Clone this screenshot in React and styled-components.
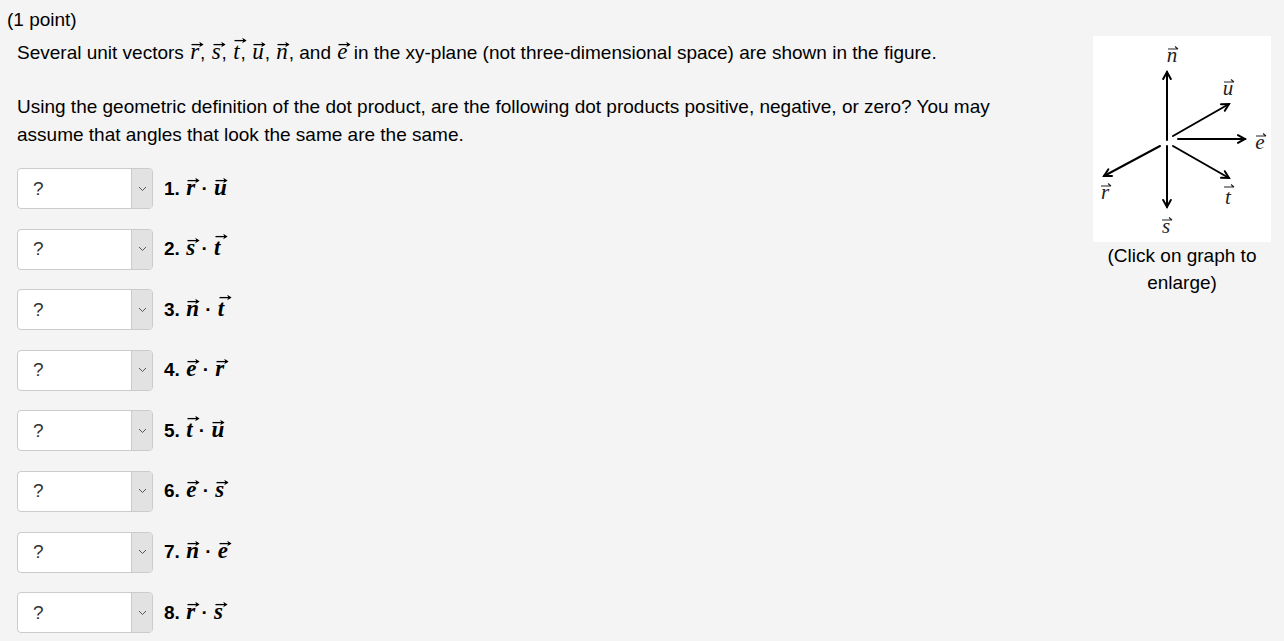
import React from 'react';
import styled, { createGlobalStyle } from 'styled-components';

const GlobalStyle = createGlobalStyle`
  body {
    margin     : 0;
    background : #f4f4f4;
    color      : #000;
    font-family: "Liberation Sans", Arial, sans-serif;
  }
`;

const ITEMS = [
  ['r', 'u'],
  ['s', 't'],
  ['n', 't'],
  ['e', 'r'],
  ['t', 'u'],
  ['e', 's'],
  ['n', 'e'],
  ['r', 's'],
];

const Vec = ({ l, bold }) => (
  <Vec.Wrap bold={bold}>
    <Vec.Arrow tall={l === 't'} viewBox="0 0 13 7" preserveAspectRatio="none">
      <path d="M0.5 3.6 H11.5" fill="none" stroke="#000" strokeWidth="1.3" />
      <path d="M8.2 0.8 L12.6 3.6 L8.2 6.2 L9.4 3.6 Z" fill="#000" />
    </Vec.Arrow>
    {l}
  </Vec.Wrap>
);

Vec.Wrap = styled.span`
  position    : relative;
  display     : inline-block;
  font-family : "Liberation Serif", "Times New Roman", serif;
  font-style  : italic;
  font-size   : 23px;
  font-weight : ${p => (p.bold ? 'bold' : 'normal')};
  line-height : 1;
  padding     : 0 1px;
`;

Vec.Arrow = styled.svg`
  position : absolute;
  left     : 2px;
  top      : ${p => (p.tall ? '-3px' : '1px')};
  width    : 13px;
  height   : 7px;
`;

const Arrow = ({ from, to }) => {
  const [x1, y1] = from;
  const [x2, y2] = to;
  const a = Math.atan2(y2 - y1, x2 - x1);
  const len = 8;
  const spread = 0.5;
  const h1 = [x2 - len * Math.cos(a - spread), y2 - len * Math.sin(a - spread)];
  const h2 = [x2 - len * Math.cos(a + spread), y2 - len * Math.sin(a + spread)];
  return (
    <g stroke="#000" strokeWidth="2" fill="none" strokeLinecap="round">
      <line x1={x1} y1={y1} x2={x2} y2={y2} />
      <polyline points={`${h1.join(',')} ${x2},${y2} ${h2.join(',')}`} />
    </g>
  );
};

const Label = ({ x, y, l, tall }) => (
  <g>
    <text
      x={x}
      y={y}
      textAnchor="middle"
      fontFamily="'Liberation Serif', 'Times New Roman', serif"
      fontStyle="italic"
      fontSize="21"
      fill="#222"
    >
      {l}
    </text>
    <path
      d={`M${x - 4} ${y - (tall ? 17 : 13)} H${x + 6} M${x + 3} ${y - (tall ? 19.5 : 15.5)} L${x + 6} ${y - (tall ? 17 : 13)}`}
      stroke="#222"
      strokeWidth="1.1"
      fill="none"
    />
  </g>
);

const Diagram = () => (
  <svg width="178" height="206" viewBox="0 0 178 206">
    <rect width="178" height="206" fill="#fff" />
    <Arrow from={[74, 104]} to={[74, 36]} />
    <Arrow from={[80, 100]} to={[136, 68]} />
    <Arrow from={[85, 103]} to={[152, 103]} />
    <Arrow from={[80, 110]} to={[136, 142]} />
    <Arrow from={[74, 110]} to={[74, 171]} />
    <Arrow from={[67, 110]} to={[11, 140]} />
    <Label x={79} y={26} l="n" />
    <Label x={135} y={59} l="u" />
    <Label x={167} y={113} l="e" />
    <Label x={135} y={168} l="t" tall />
    <Label x={12} y={163} l="r" />
    <Label x={73} y={197} l="s" />
  </svg>
);

const Chevron = () => (
  <svg width="9" height="6" viewBox="0 0 9 6">
    <path d="M1 1 L4.5 4.5 L8 1" fill="none" stroke="#555" strokeWidth="1" />
  </svg>
);

const App = () => (
  <Page>
    <GlobalStyle />
    <Points>(1 point)</Points>
    <Body>
      <Main>
        <Para>
          Several unit vectors <Vec l="r" />, <Vec l="s" />, <Vec l="t" />, <Vec l="u" />,{' '}
          <Vec l="n" />, and <Vec l="e" /> in the xy-plane (not three-dimensional space) are
          shown in the figure.
        </Para>
        <Para gap>
          Using the geometric definition of the dot product, are the following dot products
          positive, negative, or zero? You may assume that angles that look the same are the same.
        </Para>
        <List>
          {ITEMS.map(([a, b], i) => (
            <Row key={i}>
              <Select>
                <SelectValue>?</SelectValue>
                <Caret>
                  <Chevron />
                </Caret>
              </Select>
              <ItemLabel>
                {i + 1}. <Vec l={a} bold /> <Dot>·</Dot> <Vec l={b} bold />
              </ItemLabel>
            </Row>
          ))}
        </List>
      </Main>
      <Figure>
        <Diagram />
        <Caption>(Click on graph to enlarge)</Caption>
      </Figure>
    </Body>
  </Page>
);

const Page = styled.div`
  padding     : 6px 13px 0 7px;
  font-size   : 19px;
  line-height : 28px;
`;

const Points = styled.div``;

const Body = styled.div`
  display     : flex;
  align-items : flex-start;
`;

const Main = styled.div`
  flex        : 1;
  padding-left: 10px;
  padding-top : 5px;
`;

const Para = styled.p`
  margin     : ${p => (p.gap ? '26px' : '0')} 0 0;
  max-width  : 990px;
`;

const List = styled.div`
  display        : flex;
  flex-direction : column;
  gap            : 19.6px;
  margin-top     : 19px;
`;

const Row = styled.div`
  display     : flex;
  align-items : center;
  gap         : 11px;
`;

const Select = styled.div`
  display       : flex;
  width         : 136px;
  height        : 41px;
  box-sizing    : border-box;
  border        : 1px solid #cbcbcb;
  border-radius : 4px;
  background    : #fff;
  overflow      : hidden;
`;

const SelectValue = styled.div`
  flex         : 1;
  padding-left : 15px;
  display      : flex;
  align-items  : center;
  color        : #333;
  font-size    : 19px;
`;

const Caret = styled.div`
  width           : 20px;
  border-left     : 1px solid #cbcbcb;
  background      : #e2e2e2;
  display         : flex;
  align-items     : center;
  justify-content : center;
`;

const ItemLabel = styled.div`
  font-weight : bold;
  font-size   : 19px;
`;

const Dot = styled.span`
  font-weight : bold;
  font-size   : 19px;
`;

const Figure = styled.div`
  width          : 178px;
  margin-top     : 2px;
  display        : flex;
  flex-direction : column;
`;

const Caption = styled.div`
  text-align  : center;
  line-height : 27px;
`;

export default App;
